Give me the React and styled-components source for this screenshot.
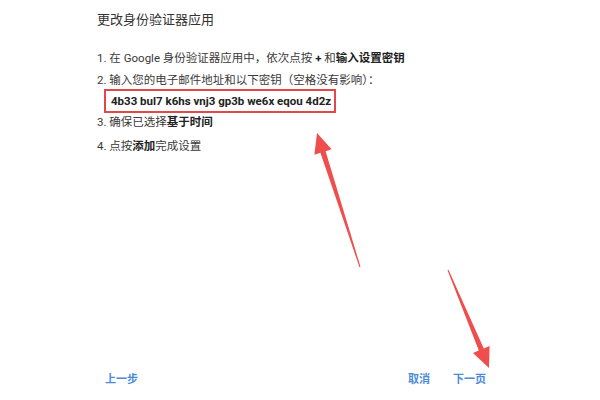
import React from 'react'
import styled, { createGlobalStyle } from 'styled-components'

const GlobalStyle = createGlobalStyle`
  html, body {
    margin: 0;
    padding: 0;
    background: #ffffff;
  }
  body {
    font-family: Roboto, "Noto Sans CJK SC", sans-serif;
  }
`

const Page = styled.div`
  position: relative;
  width: 600px;
  height: 400px;
  display: flex;
  flex-direction: column;
  background: #fff;
  overflow: hidden;
`

const Content = styled.div`
  padding: 10px 0 0 97px;
  display: flex;
  flex-direction: column;
`

const Title = styled.h1`
  margin: 0;
  font-size: 13px;
  line-height: 20px;
  font-weight: 400;
  color: #333;
`

const Steps = styled.ol`
  list-style: none;
  margin: 18px 0 0;
  padding: 0;
  display: flex;
  flex-direction: column;
`

const Step = styled.li`
  font-size: 11.5px;
  line-height: 20px;
  color: #3a3a3a;
  margin-top: ${(props) => props.$gap || 0}px;

  b {
    font-weight: 700;
    color: #222;
  }
`

const KeyBox = styled.div`
  display: inline-block;
  margin: -3px 0 0 7px;
  padding: 0 3px 0 5px;
  border: 2px solid #e2474b;
  font-size: 11.5px;
  line-height: 20px;
  font-weight: 700;
  color: #222;
`

const Footer = styled.div`
  margin-top: auto;
  padding: 0 114px 10px 105px;
  display: flex;
  align-items: center;
`

const FooterButton = styled.button`
  border: none;
  background: none;
  padding: 0;
  font-family: inherit;
  font-size: 11px;
  line-height: 20px;
  font-weight: 700;
  color: #4a8ad6;
  cursor: pointer;
  margin-left: ${(props) => props.$left || 0}px;
`

const Spacer = styled.div`
  flex: 1;
`

const Overlay = styled.svg`
  position: absolute;
  left: 0;
  top: 0;
  pointer-events: none;
`

const Arrows = () => (
  <Overlay width="600" height="400" viewBox="0 0 600 400">
    <polygon
      fill="#ef4d4e"
      points="317,133 331.6,149.3 325.6,151.2 360.5,266.8 359.5,267.2 320.4,152.8 314.4,154.7"
    />
    <polygon
      fill="#ef4d4e"
      points="489,368 473,353 478.8,350.6 447.5,270.2 448.5,269.8 483.8,348.4 489.6,346"
    />
  </Overlay>
)

export default function App() {
  return (
    <>
      <GlobalStyle />
      <Page>
        <Content>
          <Title>更改身份验证器应用</Title>
          <Steps>
            <Step>1. 在 Google 身份验证器应用中，依次点按 <b>+</b> 和<b>输入设置密钥</b></Step>
            <Step $gap={2}>2. 输入您的电子邮件地址和以下密钥（空格没有影响）：</Step>
            <li>
              <KeyBox>4b33 bul7 k6hs vnj3 gp3b we6x eqou 4d2z</KeyBox>
            </li>
            <Step $gap={-1}>3. 确保已选择<b>基于时间</b></Step>
            <Step $gap={4}>4. 点按<b>添加</b>完成设置</Step>
          </Steps>
        </Content>
        <Footer>
          <FooterButton>上一步</FooterButton>
          <Spacer />
          <FooterButton>取消</FooterButton>
          <FooterButton $left={23}>下一页</FooterButton>
        </Footer>
        <Arrows />
      </Page>
    </>
  )
}
